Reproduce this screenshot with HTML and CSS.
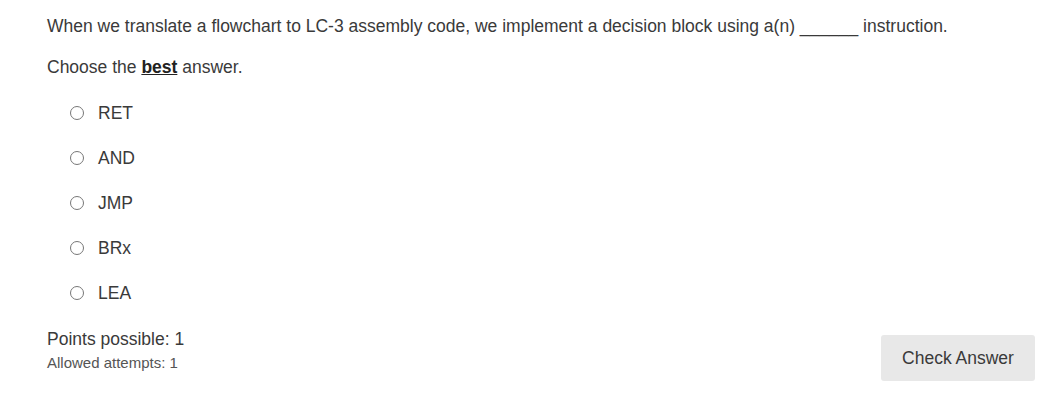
FILE: index.html
```html
<!DOCTYPE html>
<html>
<head>
<meta charset="utf-8">
<link rel="stylesheet" href="styles.css">
</head>
<body>
<div class="question">
  <p class="prompt">When we translate a flowchart to LC-3 assembly code, we implement a decision block using a(n) ______ instruction.</p>
  <p class="choose">Choose the <b>best</b> answer.</p>
  <ul class="options">
    <li class="option"><span class="radio"></span><span class="label">RET</span></li>
    <li class="option"><span class="radio"></span><span class="label">AND</span></li>
    <li class="option"><span class="radio"></span><span class="label">JMP</span></li>
    <li class="option"><span class="radio"></span><span class="label">BRx</span></li>
    <li class="option"><span class="radio"></span><span class="label">LEA</span></li>
  </ul>
  <div class="footer">
    <div class="meta">
      <div class="points">Points possible: 1</div>
      <div class="attempts">Allowed attempts: 1</div>
    </div>
    <button class="check">Check Answer</button>
  </div>
</div>
</body>
</html>
```
FILE: styles.css
```css
html, body {
  margin: 0;
  padding: 0;
  background: #ffffff;
}
body {
  font-family: "Liberation Sans", Arial, sans-serif;
  color: #3a3a3a;
  font-size: 17.5px;
}
.question {
  padding: 16px 20px 0 47px;
}
.prompt {
  margin: 0;
  line-height: 20px;
}
.choose {
  margin: 21px 0 0 0;
  line-height: 20px;
}
.choose b {
  text-decoration: underline;
  color: #222;
}
.options {
  list-style: none;
  margin: 13px 0 0 0;
  padding: 0 0 0 23px;
}
.option {
  display: flex;
  align-items: center;
  height: 45px;
}
.radio {
  width: 12px;
  height: 12px;
  border: 1.3px solid #777;
  border-radius: 50%;
  box-sizing: content-box;
  margin-right: 14px;
}
.label {
  line-height: 20px;
}
.footer {
  display: flex;
  justify-content: space-between;
  align-items: flex-start;
  margin-top: 14px;
}
.points {
  line-height: 20px;
}
.attempts {
  font-size: 15px;
  color: #555;
  margin-top: 6px;
  line-height: 16px;
}
.check {
  font-family: "Liberation Sans", Arial, sans-serif;
  font-size: 17.5px;
  color: #3a3a3a;
  background: #e8e8e8;
  border: none;
  border-radius: 3px;
  width: 154px;
  height: 46px;
  padding: 0;
  margin-top: 6px;
}
```
